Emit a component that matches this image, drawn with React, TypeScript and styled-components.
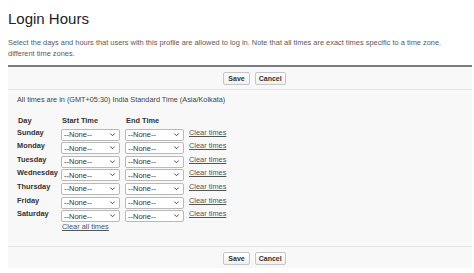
import React from 'react';
import styled, { createGlobalStyle } from 'styled-components';

const DAYS = ['Sunday', 'Monday', 'Tuesday', 'Wednesday', 'Thursday', 'Friday', 'Saturday'];

const GlobalStyle = createGlobalStyle`
  html, body {
    margin: 0;
    padding: 0;
    background: #ffffff;
  }
  body {
    font-family: "Liberation Sans", Arial, sans-serif;
    color: #333333;
    overflow: hidden;
  }
`;

const Chevron = () => (
  <ChevronIcon viewBox="0 0 10 6" aria-hidden="true">
    <path d="M1 1 L5 5 L9 1" fill="none" stroke="#333" strokeWidth="1.8" strokeLinecap="round" strokeLinejoin="round" />
  </ChevronIcon>
);

const TimeSelect = () => (
  <SelectWrap>
    <Select defaultValue="">
      <option value="">--None--</option>
    </Select>
    <Chevron />
  </SelectWrap>
);

const ButtonBar = ({ bottom }: { bottom?: boolean }) => (
  <Bar bottom={bottom}>
    <Button>Save</Button>
    <Button>Cancel</Button>
  </Bar>
);

const App = () => (
  <Page>
    <GlobalStyle />
    <Title>Login Hours</Title>
    <Description>
      <Line>Select the days and hours that users with this profile are allowed to log in. Note that all times are exact times specific to a time zone.</Line>
      <Line>different time zones.</Line>
    </Description>
    <Panel>
      <ButtonBar />
      <Content>
        <TimeZone>All times are in (GMT+05:30) India Standard Time (Asia/Kolkata)</TimeZone>
        <HoursGrid>
          <HeadCell>Day</HeadCell>
          <HeadCell>Start Time</HeadCell>
          <HeadCell>End Time</HeadCell>
          <HeadCell />
          {DAYS.map((day) => (
            <React.Fragment key={day}>
              <DayCell>{day}</DayCell>
              <TimeSelect />
              <TimeSelect />
              <ClearLink href="#">Clear times</ClearLink>
            </React.Fragment>
          ))}
          <span />
          <ClearAll href="#">Clear all times</ClearAll>
        </HoursGrid>
      </Content>
      <ButtonBar bottom />
    </Panel>
  </Page>
);

export default App;

const Page = styled.div`
  width: 474px;
  height: 273px;
  padding: 10px 0 0 8px;
  box-sizing: border-box;
`;

const Title = styled.h1`
  margin: 0;
  font-size: 15px;
  line-height: 18px;
  font-weight: 400;
  color: #222222;
`;

const Description = styled.div`
  margin-top: 9px;
  font-size: 7.43px;
  line-height: 11px;
  color: #5a5a5a;
`;

const Line = styled.div`
  white-space: nowrap;
`;

const Panel = styled.div`
  margin-top: 6px;
  width: 464px;
  background: #f8f8f8;
  border-top: 2px solid #7b7d80;
`;

const Bar = styled.div<{ bottom?: boolean }>`
  display: flex;
  justify-content: center;
  gap: 5px;
  padding: ${({ bottom }) => (bottom ? '5px 0 3px 29px' : '5px 0 4px 29px')};
  ${({ bottom }) => (bottom ? 'border-top: 1px solid #e3e3e3;' : 'border-bottom: 1px solid #e3e3e3;')}
`;

const Button = styled.button`
  height: 13px;
  padding: 0 3px;
  font-family: "Liberation Sans", Arial, sans-serif;
  font-size: 7px;
  font-weight: 700;
  color: #333333;
  background: linear-gradient(#ffffff, #f0f0f0);
  border: 1px solid #c6c6c6;
  border-radius: 2px;
  line-height: 11px;

  &:first-child {
    padding: 0 4px;
  }
`;

const Content = styled.div`
  padding: 5px 0 12px 9px;
`;

const TimeZone = styled.div`
  font-size: 7.3px;
  line-height: 10px;
  color: #444444;
`;

const HoursGrid = styled.div`
  margin-top: 11px;
  display: grid;
  grid-template-columns: 44px 64px 64px auto;
  grid-template-rows: 11px repeat(7, 12px) 10px;
  row-gap: 1.6px;
  align-items: start;
  font-size: 7.4px;
  line-height: 10px;
`;

const HeadCell = styled.div`
  font-weight: 700;
  color: #333333;
  padding-left: 1px;
  line-height: 10px;
`;

const DayCell = styled.div`
  font-weight: 700;
  color: #333333;
  line-height: 10px;
  margin-top: -1px;
`;

const SelectWrap = styled.div`
  position: relative;
  width: 59px;
  height: 12px;
`;

const Select = styled.select`
  appearance: none;
  width: 100%;
  height: 100%;
  margin: 0;
  padding: 0 0 0 2px;
  box-sizing: border-box;
  font-family: "Liberation Sans", Arial, sans-serif;
  font-size: 7.5px;
  color: #333333;
  background: #ffffff;
  border: 1px solid #b9b9b9;
  border-radius: 2px;
  outline: none;
`;

const ChevronIcon = styled.svg`
  position: absolute;
  right: 5px;
  top: 4px;
  width: 5px;
  height: 3.5px;
  pointer-events: none;
`;

const ClearLink = styled.a`
  color: #555555;
  text-decoration: underline;
  line-height: 10px;
  white-space: nowrap;
  margin-top: -1px;
`;

const ClearAll = styled(ClearLink)`
  grid-column: 2 / span 2;
  padding-left: 1px;
  margin-top: -2px;
`;
